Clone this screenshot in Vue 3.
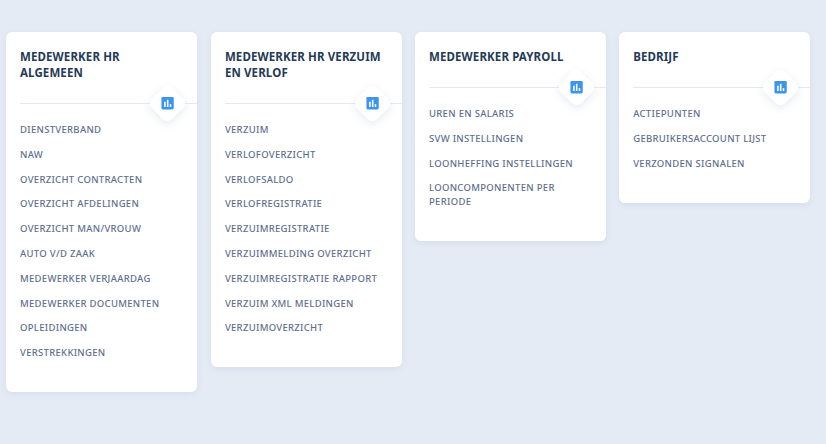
<script setup>
const cards = [
  { title: 'MEDEWERKER HR ALGEMEEN', items: ['DIENSTVERBAND','NAW','OVERZICHT CONTRACTEN','OVERZICHT AFDELINGEN','OVERZICHT MAN/VROUW','AUTO V/D ZAAK','MEDEWERKER VERJAARDAG','MEDEWERKER DOCUMENTEN','OPLEIDINGEN','VERSTREKKINGEN'] },
  { title: 'MEDEWERKER HR VERZUIM EN VERLOF', items: ['VERZUIM','VERLOFOVERZICHT','VERLOFSALDO','VERLOFREGISTRATIE','VERZUIMREGISTRATIE','VERZUIMMELDING OVERZICHT','VERZUIMREGISTRATIE RAPPORT','VERZUIM XML MELDINGEN','VERZUIMOVERZICHT'] },
  { title: 'MEDEWERKER PAYROLL', items: ['UREN EN SALARIS','SVW INSTELLINGEN','LOONHEFFING INSTELLINGEN','LOONCOMPONENTEN PER PERIODE'] },
  { title: 'BEDRIJF', items: ['ACTIEPUNTEN','GEBRUIKERSACCOUNT LIJST','VERZONDEN SIGNALEN'] },
]
</script>

<template>
  <div class="page">
    <section v-for="c in cards" :key="c.title" class="card">
      <h3 class="title">{{ c.title }}</h3>
      <div class="divider">
        <span class="badge">
          <svg class="icon" width="12.5" height="12.5" viewBox="0 0 13 13">
            <rect width="13" height="13" rx="1.5" fill="#3b95ec" />
            <rect x="3" y="5" width="1.6" height="5.5" fill="#fff" />
            <rect x="5.9" y="3" width="1.6" height="7.5" fill="#fff" />
            <rect x="8.8" y="7.5" width="1.6" height="3" fill="#fff" />
          </svg>
        </span>
      </div>
      <ul class="list">
        <li v-for="i in c.items" :key="i">{{ i }}</li>
      </ul>
    </section>
  </div>
</template>

<style>
html, body { margin: 0; background: #e4ebf4; }
</style>

<style scoped>
.page {
  width: 826px;
  height: 444px;
  box-sizing: border-box;
  padding: 32px 0 0 6px;
  display: grid;
  grid-template-columns: 204.9px 204.1px 204.2px 190.75px;
  align-items: start;
  background: #e4ebf4;
  font-family: "Noto Sans", "Open Sans", sans-serif;
}
.card {
  width: 190.75px;
  box-sizing: border-box;
  background: #fff;
  border-radius: 6px;
  box-shadow: 0 2px 6px rgba(90, 115, 160, 0.1);
  padding: 17px 0 32px 14px;
}
.title {
  margin: 0;
  padding-right: 14px;
  font-size: 11.5px;
  line-height: 16px;
  font-weight: 700;
  letter-spacing: 0.12px;
  color: #1f3b57;
}
.divider {
  position: relative;
  height: 1px;
  margin-top: 22px;
  background: #e5eaf2;
}
.badge {
  position: absolute;
  right: 14.5px;
  top: -14px;
  width: 29px;
  height: 29px;
  transform: rotate(45deg);
  background: #fff;
  border-radius: 7px;
  box-shadow: 2px 2px 9px rgba(90, 115, 160, 0.14);
  display: flex;
  align-items: center;
  justify-content: center;
}
.icon { transform: rotate(-45deg); }
.list {
  list-style: none;
  margin: 19px 0 0;
  padding: 0 14px 0 0;
  display: flex;
  flex-direction: column;
  gap: 10.8px;
}
.list li {
  font-size: 9.5px;
  line-height: 14px;
  font-weight: 500;
  letter-spacing: 0.3px;
  color: #616f8e;
}
</style>
